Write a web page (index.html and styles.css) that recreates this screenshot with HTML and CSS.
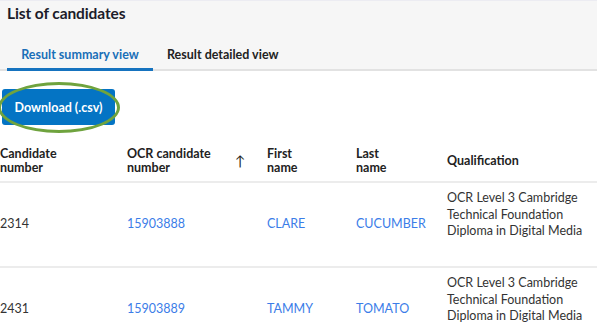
FILE: index.html
```html
<!DOCTYPE html>
<html>
<head>
<meta charset="utf-8">
<link rel="stylesheet" href="styles.css">
</head>
<body>
<div class="header">
  <h1 class="title">List of candidates</h1>
  <div class="tabs">
    <div class="tab active">Result summary view</div>
    <div class="tab">Result detailed view</div>
  </div>
</div>
<div class="actions">
  <button class="btn">Download (.csv)</button>
  <div class="ring"></div>
</div>
<table class="grid">
  <thead>
    <tr>
      <th class="c1">Candidate<br>number</th>
      <th class="c2"><div class="sort"><span>OCR candidate<br>number</span><span class="arrow">&#8593;</span></div></th>
      <th class="c3">First<br>name</th>
      <th class="c4">Last<br>name</th>
      <th class="c5">Qualification</th>
    </tr>
  </thead>
  <tbody>
    <tr>
      <td>2314</td>
      <td><a>15903888</a></td>
      <td><a>CLARE</a></td>
      <td><a>CUCUMBER</a></td>
      <td class="qual">OCR Level 3 Cambridge<br>Technical Foundation<br>Diploma in Digital Media</td>
    </tr>
    <tr>
      <td>2431</td>
      <td><a>15903889</a></td>
      <td><a>TAMMY</a></td>
      <td><a>TOMATO</a></td>
      <td class="qual">OCR Level 3 Cambridge<br>Technical Foundation<br>Diploma in Digital Media</td>
    </tr>
  </tbody>
</table>
</body>
</html>
```
FILE: styles.css
```css
html, body { margin: 0; padding: 0; background: #fff; }
body { font-family: Lato, "Noto Sans", sans-serif; color: #222; overflow: hidden; height: 332px; }
.header {
  background: #f6f6f6;
  border-top: 1px solid #ececf2;
  border-bottom: 2px solid #e2e2e2;
  height: 68px;
  padding: 0 7px;
}
.title { margin: 0; padding-top: 2px; font-size: 15.5px; font-weight: 700; line-height: 20px; color: #1c1c2a; letter-spacing: -0.1px; }
.tabs { display: flex; margin-top: 18px; }
.tab { font-size: 12.5px; font-weight: 700; padding: 6px 0 0; color: #222; box-sizing: content-box; }
.tab.active { color: #1a6fb8; border-bottom: 3px solid #1673bf; width: 146px; height: 21px; text-align: center; margin-right: 14px; }
.tab:not(.active) { height: 24px; }
.actions { position: relative; padding: 18px 0 0 2px; height: 37px; }
.btn {
  display: block;
  width: 113px; height: 36px;
  background: #0474c4; color: #fff; border: 0; border-radius: 3px;
  font-family: inherit; font-size: 12.5px; font-weight: 700;
}
.ring {
  position: absolute; left: -2px; top: 11px;
  width: 116px; height: 45px;
  border: 3px solid #6fa33e; border-radius: 50%;
}
.grid { border-collapse: collapse; margin-top: 16px; width: 597px; font-size: 12.5px; }
.grid th { text-align: left; font-weight: 700; font-size: 12.5px; line-height: 14px; vertical-align: middle; padding: 5px 0 6px; border-bottom: 2px solid #ececec; color: #222; height: 28px; }
.c1 { width: 127px; }
.c2 { width: 140px; }
.c3 { width: 89px; }
.c4 { width: 91px; }
.sort { display: flex; align-items: center; }
.arrow { margin-left: 24px; font-weight: 400; font-size: 14px; }
.grid td { height: 83px; padding: 0; line-height: 16.5px; border-bottom: 2px solid #ececec; vertical-align: middle; color: #333; }
.grid td.qual { vertical-align: top; padding-top: 7px; height: 76px; }
.grid a { color: #3b7de8; }
```
